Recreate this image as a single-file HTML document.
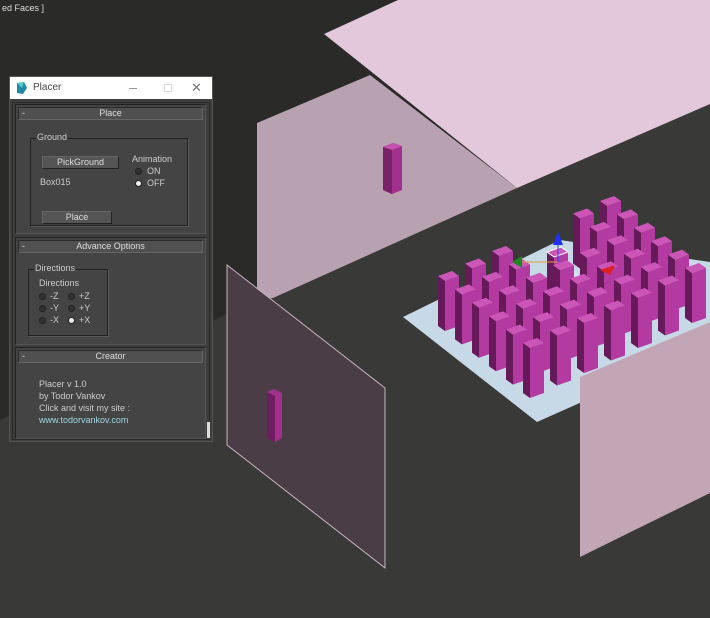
<!DOCTYPE html>
<html><head><meta charset="utf-8"><style>
*{margin:0;padding:0;box-sizing:border-box}
body{width:710px;height:618px;overflow:hidden;background:#2a2a28;font-family:"Liberation Sans",sans-serif;position:relative}
svg{position:absolute;left:0;top:0}
.t{position:absolute;color:#d8d8d8;font-size:9px;white-space:nowrap}
#win{position:absolute;left:9px;top:76px;width:204px;height:366px;background:#3e3e3e;border:1px solid #555}
#tb{position:absolute;left:0;top:0;width:202px;height:22px;background:#fff}
.ro{position:absolute;left:5px;width:191px;border:1px solid #222;border-right-color:#555;border-bottom-color:#555;background:#444}
.hd{position:absolute;left:2px;top:2px;right:2px;height:13px;background:#505050;border:1px solid #2a2a2a;border-right-color:#666;border-bottom-color:#666;color:#ddd;font-size:9px;text-align:center;line-height:11px}
.hd b{position:absolute;left:3px;top:0;font-weight:normal}
.gb{position:absolute;border:1px solid #222;box-shadow:1px 1px 0 #5a5a5a}
.gl{position:absolute;top:-7px;left:5px;background:#444;color:#ccc;font-size:9px;padding:0 1px}
.btn{position:absolute;background:#555;border:1px solid #666;border-right-color:#222;border-bottom-color:#222;color:#ddd;font-size:9px;text-align:center;line-height:11px;height:13px}
.rb{position:absolute;width:7px;height:7px;border-radius:50%;background:#333;border:1px solid #222}
.rb.on{background:#eee}
.lb{position:absolute;color:#ccc;font-size:9px;white-space:nowrap}
</style></head><body>
<svg width="710" height="618" id="s">
<polygon points="0,0 710,0 710,100 273,298 257,300 0,420" fill="#2a2a28"/>
<polygon points="257,300 710,100 710,618 0,618 0,420" fill="#393937"/>
<polygon points="257,123 370,75 517,188 273,298 257,300" fill="#b8a1b0"/>
<polygon points="324,34 398,0 710,0 710,104 517,188" fill="#e3c7da"/>
<polygon points="383,147 393,143 402,146 402,190 392,194 383,190" fill="#a2308f"/>
<polygon points="383,147 393,143 402,146 392,150" fill="#c452ae"/>
<polygon points="383,147 392,150 392,194 383,190" fill="#7a2169"/>
<polygon points="403,317 560,240 710,262 710,345 537,422" fill="#c7d8e6"/>
<polygon points="540,282 575,270 590,290 560,300" fill="#d6e4ee"/>
<g id="p"></g>
<polygon points="227,265 385,388 385,568 227,445" fill="#4a3d46" stroke="#c9b3c2" stroke-width="1"/>
<polygon points="267,392 274,389 282,393 282,438 275,442 267,438" fill="#a2308f"/>
<polygon points="267,392 275,396 275,442 267,438" fill="#6e1d61"/>
<polygon points="580,377 710,322 710,493 580,557" fill="#c3a6b6"/>
<text x="2" y="11" fill="#ddd" font-size="9" font-family="Liberation Sans">ed Faces ]</text>
</svg>
<script>
var g=document.getElementById('p'),out=[];
var ox=438,oy=272;
for(var j=0;j<7;j++)for(var i=0;i<6;i++){
 if((j==3||j==4)&&(i==0||i==1))continue;
 var x=ox+i*17+j*27,y=oy+i*13.4-j*12.5;
 out.push([x,y]);
}
out.push([547,248]);
out.sort(function(a,b){return a[1]-b[1]});
var h='';
out.forEach(function(p){var x=p[0],y=p[1],H=50;
 var sel=(x==547&&y==248);
 h+='<polygon points="'+x+','+(y+4)+' '+(x+7)+','+(y+9)+' '+(x+7)+','+(y+9+H)+' '+x+','+(y+4+H)+'" fill="#661a5a"/>';
 h+='<polygon points="'+(x+7)+','+(y+9)+' '+(x+21)+','+(y+4)+' '+(x+21)+','+(y+4+H)+' '+(x+7)+','+(y+9+H)+'" fill="#b23aa0"/>';
 h+='<polygon points="'+x+','+(y+4)+' '+(x+14)+','+(y-1)+' '+(x+21)+','+(y+4)+' '+(x+7)+','+(y+9)+'" fill="#cc56b8"'+(sel?' stroke="#fff"':'')+'/>';
});
h+='<line x1="558" y1="262" x2="515" y2="262" stroke="#e0a040"/><polygon points="512,262 522,256 522,268" fill="#1a8a20"/>';
h+='<line x1="558" y1="262" x2="558" y2="238" stroke="#3040ff"/><polygon points="553,245 558,232 563,245" fill="#2030ff"/>';
h+='<polygon points="600,270 615,265 610,275" fill="#e02020"/>';
g.innerHTML=h;
</script>
<div id="win">
 <div id="tb">
  <svg width="14" height="14" style="left:5px;top:4px"><polygon points="2,2 9,1 12,7 8,13 2,12" fill="#1e8aa8"/><polygon points="2,2 9,1 7,7" fill="#5cc" /></svg>
  <div class="t" style="left:23px;top:5px;color:#444;font-size:10px">Placer</div>
  <div style="position:absolute;left:119px;top:11px;width:8px;height:1px;background:#999"></div>
  <div style="position:absolute;left:154px;top:7px;width:8px;height:8px;border:1px solid #ddd"></div>
  <div class="t" style="left:181px;top:3px;color:#777;font-size:13px">✕</div>
 </div>
 <div style="position:absolute;left:2px;top:25px;width:198px;height:338px;border:1px solid #2a2a2a;background:#3d3d3d"></div>
 <div style="position:absolute;left:197px;top:345px;width:3px;height:16px;background:#ddd"></div>
 <div class="ro" style="top:27px;height:130px">
  <div class="hd"><b>-</b>Place</div>
  <div class="gb" style="left:14px;top:33px;width:158px;height:88px"><span class="gl">Ground</span>
   <div class="btn" style="left:11px;top:17px;width:77px">PickGround</div>
   <div class="lb" style="left:9px;top:38px">Box015</div>
   <div class="btn" style="left:11px;top:72px;width:70px">Place</div>
   <div class="lb" style="left:101px;top:15px">Animation</div>
   <div class="rb" style="left:104px;top:29px"></div><div class="lb" style="left:116px;top:27px">ON</div>
   <div class="rb on" style="left:104px;top:41px"></div><div class="lb" style="left:116px;top:39px">OFF</div>
  </div>
 </div>
 <div class="ro" style="top:160px;height:108px">
  <div class="hd"><b>-</b>Advance Options</div>
  <div class="gb" style="left:12px;top:31px;width:80px;height:67px"><span class="gl">Directions</span>
   <div class="lb" style="left:10px;top:8px">Directions</div>
   <div class="rb" style="left:10px;top:23px"></div><div class="lb" style="left:21px;top:21px">-Z</div>
   <div class="rb" style="left:39px;top:23px"></div><div class="lb" style="left:50px;top:21px">+Z</div>
   <div class="rb" style="left:10px;top:35px"></div><div class="lb" style="left:21px;top:33px">-Y</div>
   <div class="rb" style="left:39px;top:35px"></div><div class="lb" style="left:50px;top:33px">+Y</div>
   <div class="rb" style="left:10px;top:47px"></div><div class="lb" style="left:21px;top:45px">-X</div>
   <div class="rb on" style="left:39px;top:47px"></div><div class="lb" style="left:50px;top:45px">+X</div>
  </div>
 </div>
 <div class="ro" style="top:270px;height:92px">
  <div class="hd"><b>-</b>Creator</div>
  <div class="lb" style="left:23px;top:31px">Placer v 1.0</div>
  <div class="lb" style="left:23px;top:43px">by Todor Vankov</div>
  <div class="lb" style="left:23px;top:55px">Click and visit my site :</div>
  <div class="lb" style="left:23px;top:67px;color:#9ed8e0">www.todorvankov.com</div>
 </div>
</div>
</body></html>
